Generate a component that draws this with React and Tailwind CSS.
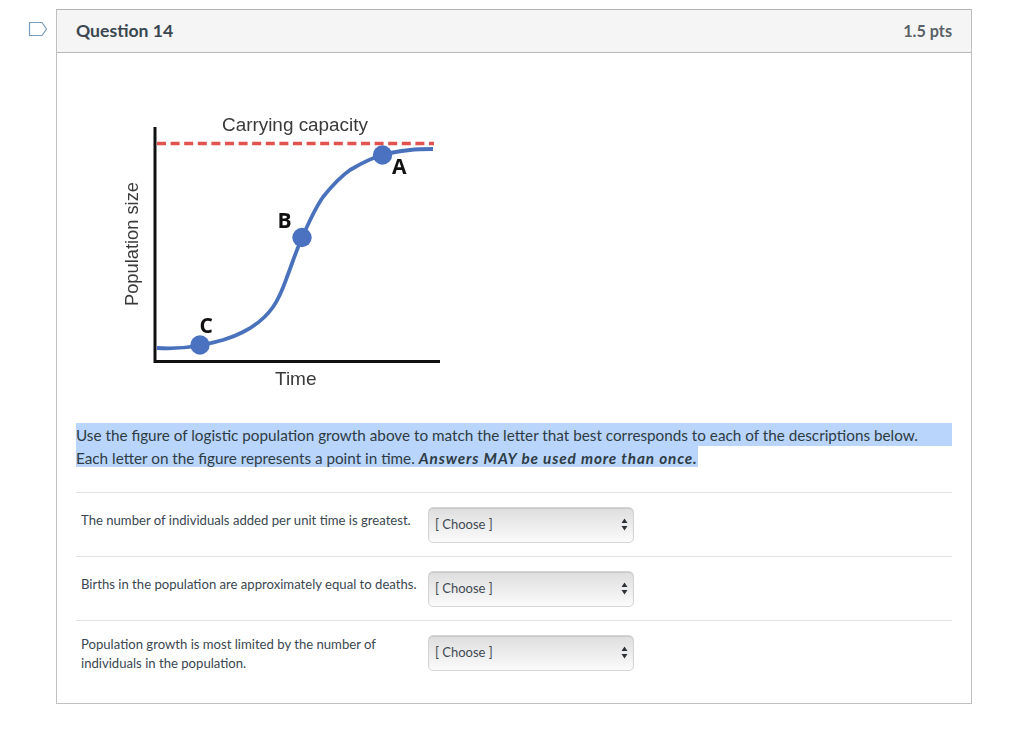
const filas = [
  { texto: "The number of individuals added per unit time is greatest.", ajuste: "-mt-[9px]" },
  { texto: "Births in the population are approximately equal to deaths.", ajuste: "-mt-[9px]" },
  {
    texto: "Population growth is most limited by the number of individuals in the population.",
    ajuste: "mt-[3px]",
  },
];

function Figura() {
  return (
    <svg width="340" height="300" viewBox="0 0 340 300" className="block blur-[0.6px]">
      <text x="112" y="31" fontSize="18.9" fill="#3a3a3a" fontFamily="Liberation Sans, Arial, sans-serif">
        Carrying capacity
      </text>
      <line x1="47" y1="43.5" x2="324" y2="43.5" stroke="#e2524e" strokeWidth="3.4" strokeDasharray="9 4.6" />
      <path d="M45 27V261.5H330" fill="none" stroke="#111111" strokeWidth="3" />
      <path
        d="M47 248C62 249 76 248 90 245.5C106 242 120 239 133 232C147 225 156 217 163 207C170 197 173 188 177 177C182 164 186 151 192 138C198 124 204 110 213 97C221 87 230 77 240 70C250 64 261 58 273 55C282 52 291 51 300 50C308 49 315 49 323 49"
        fill="none"
        stroke="#4a72bc"
        strokeWidth="3.8"
      />
      <circle cx="272.5" cy="55" r="9.7" fill="#4a72c0" />
      <circle cx="192" cy="137.5" r="9.7" fill="#4a72c0" />
      <circle cx="90" cy="245" r="9.7" fill="#4a72c0" />
      <g fontSize="21" fontWeight="700" fill="#111111" fontFamily="Open Sans, sans-serif">
        <text x="282" y="74">A</text>
        <text x="167.5" y="128">B</text>
        <text x="89.5" y="233">C</text>
      </g>
      <text x="165" y="285" fontSize="19" fill="#3a3a3a" fontFamily="Liberation Sans, Arial, sans-serif">
        Time
      </text>
      <text
        transform="translate(28 206) rotate(-90)"
        fontSize="18.3"
        fill="#3a3a3a"
        fontFamily="Liberation Sans, Arial, sans-serif"
      >
        Population size
      </text>
    </svg>
  );
}

function Selector() {
  return (
    <div className="relative w-[206px] h-[36px] shrink-0">
      <select className="appearance-none w-full h-full pl-[6px] pt-[1px] text-[13px] text-[#3f4a52] rounded-[5px] border border-[#d4d4d4] bg-gradient-to-b from-[#dedede] via-[#ececec] to-[#fbfbfb] shadow-[inset_0_1px_1px_rgba(0,0,0,0.1)]">
        <option>[ Choose ]</option>
      </select>
      <svg
        width="7"
        height="13"
        viewBox="0 0 7 13"
        className="absolute right-[6px] top-[11px] pointer-events-none"
      >
        <path d="M3.5 .5L6.5 5H.5ZM.5 8H6.5L3.5 12.5Z" fill="#2f3338" />
      </svg>
    </div>
  );
}

export default function App() {
  return (
    <div className="min-h-[733px] bg-white flex items-start pt-[9px] font-['Lato',sans-serif] text-[#2d3b45]">
      <div className="w-[56px] shrink-0 pl-[28px] pt-[12px]">
        <svg width="20" height="16" viewBox="0 0 20 16" className="block">
          <path d="M1.5 1.5H14L18.5 8L14 14.5H1.5Z" fill="none" stroke="#7a9cba" strokeWidth="1.2" />
        </svg>
      </div>

      <div className="w-[916px] h-[695px] border border-[#c0c0c0] border-t-[#b4b4b4]">
        <div className="h-[43px] flex items-center justify-between px-[19px] bg-[#f5f5f5] border-b border-[#b8b8b8]">
          <h2 className="text-[17.6px] font-bold text-[#3a4750] pt-[1px]">Question 14</h2>
          <span className="text-[16.2px] font-bold text-[#5a6268] pt-[1px]">1.5 pts</span>
        </div>

        <div className="px-[19px]">
          <div className="-ml-[19px] pl-[53px] pt-[47px] h-[370px]">
            <Figura />
          </div>

          <div className="text-[15.28px] leading-[23px] text-[#2d3b45]">
            <div className="bg-[#b9d5fb] h-[23px] pt-[1px]">
              Use the figure of logistic population growth above to match the letter that best corresponds to each of the descriptions below.
            </div>
            <div className="bg-[#b9d5fb] w-fit h-[21px] pt-[1px]">
              Each letter on the figure represents a point in time.{" "}
              <strong className="font-bold italic tracking-[0.88px]">Answers MAY be used more than once.</strong>
            </div>
          </div>

          <div className="mt-[25px]">
            {filas.map((fila) => (
              <div key={fila.texto} className="flex items-center border-t border-[#e2e2e2] h-[64px]">
                <p className={`w-[352px] pl-[5px] pr-[7px] text-[13.12px] leading-[19px] text-[#3a4750] ${fila.ajuste}`}>
                  {fila.texto}
                </p>
                <Selector />
              </div>
            ))}
          </div>
        </div>
      </div>
    </div>
  );
}
